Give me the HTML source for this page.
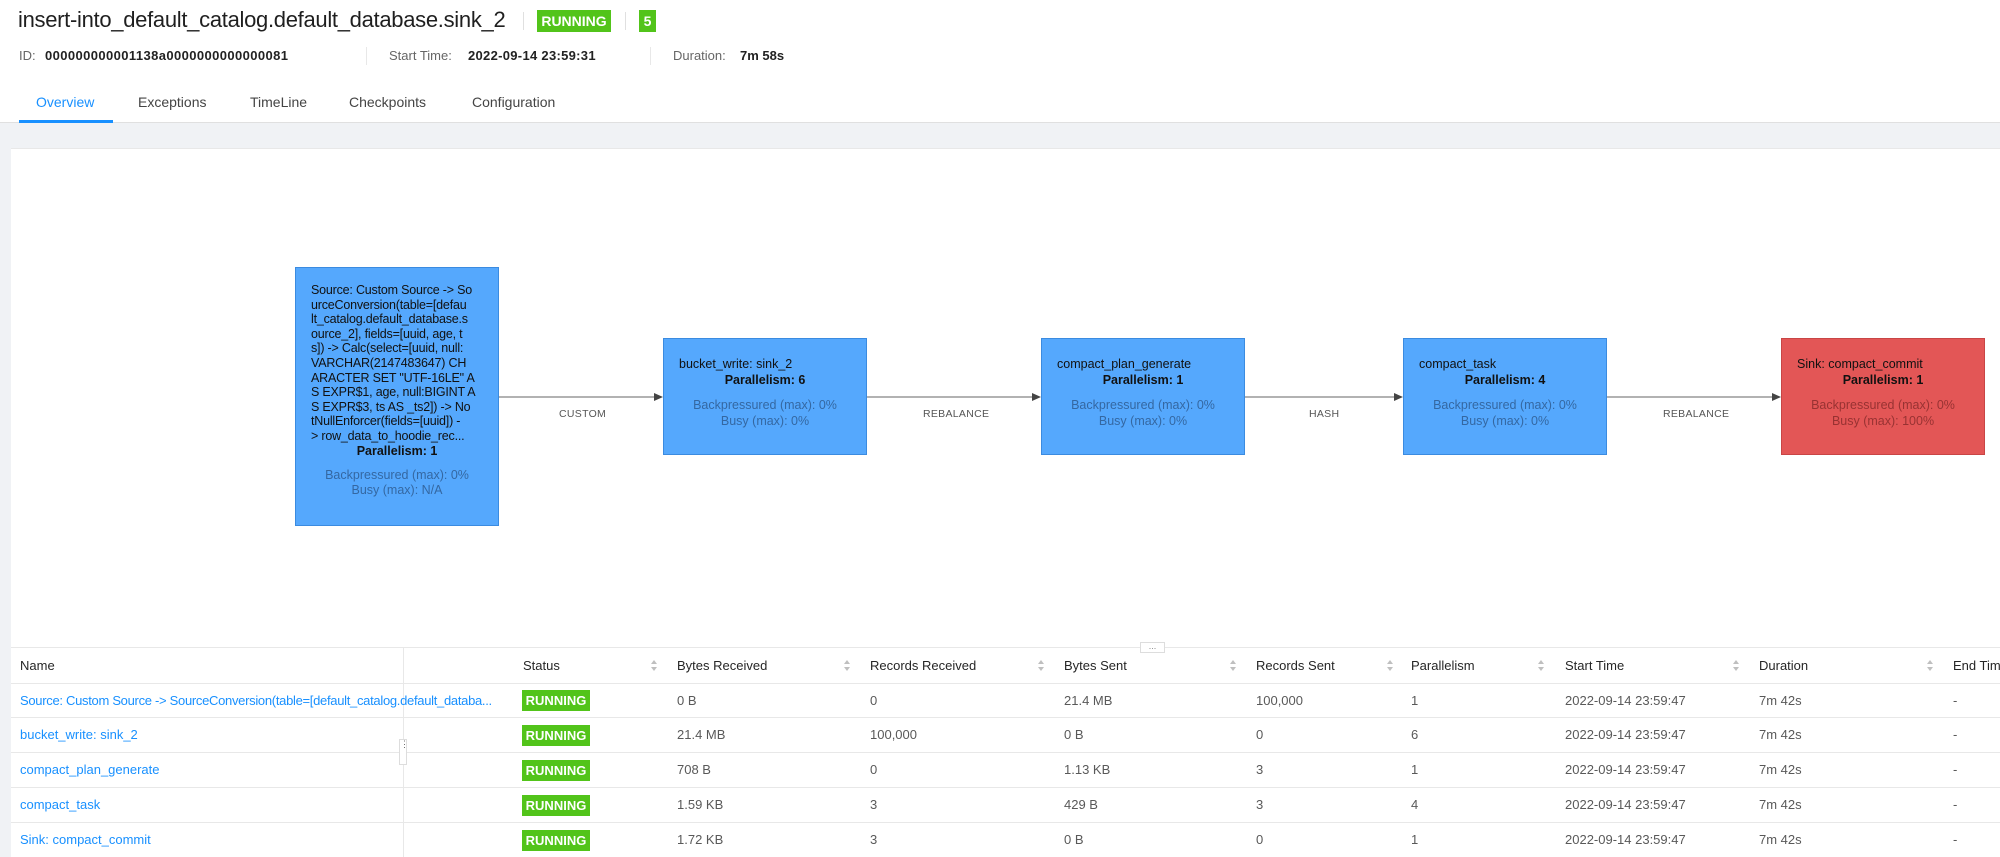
<!DOCTYPE html>
<html><head><meta charset="utf-8"><style>
*{margin:0;padding:0;box-sizing:border-box}
body{width:2000px;height:857px;overflow:hidden;background:#fff;font-family:"Liberation Sans",sans-serif;position:relative;color:#595959}
.a{position:absolute;white-space:nowrap}
.badge{position:absolute;background:#52c41a;color:#fff;font-weight:bold;text-align:center}
.node{position:absolute;background:#55a8fd;border:1px solid #3b8be0;font-size:12.5px;line-height:15.5px;color:#111}
.node.red{background:#e35656;border-color:#c94545}
.node .t{padding:0 10px 0 15px;white-space:nowrap}
.node .p{text-align:center;font-weight:bold}
.node .m{text-align:center;color:rgba(30,60,100,.6);margin-top:10px;line-height:15.5px}
.node.red .m{color:rgba(110,30,30,.65)}
.el{position:absolute;font-size:10.5px;color:#555;letter-spacing:.3px}
.hd{position:absolute;font-size:13px;color:#262626;top:658px;white-space:nowrap}
.cell{position:absolute;font-size:13px;color:#595959;white-space:nowrap}
.lnk{color:#1890ff}
.hl{position:absolute;left:11px;right:0;height:1px;background:#e8e8e8}
</style></head><body>
<div class="a" style="left:18px;top:7px;font-size:22px;color:#1f1f1f;letter-spacing:-0.3px">insert-into_default_catalog.default_database.sink_2</div>
<div class="a" style="left:523px;top:12px;width:1px;height:18px;background:#e0e0e0"></div>
<div class="badge" style="left:537px;top:10px;width:74px;height:22px;font-size:14px;line-height:22px">RUNNING</div>
<div class="a" style="left:625px;top:12px;width:1px;height:18px;background:#e0e0e0"></div>
<div class="badge" style="left:639px;top:10px;width:17px;height:22px;font-size:14px;line-height:22px">5</div>

<div class="a" style="left:19px;top:48px;font-size:13px;color:#666">ID:</div>
<div class="a" style="left:45px;top:48px;font-size:13px;color:#222;font-weight:bold;letter-spacing:0.4px">000000000001138a0000000000000081</div>
<div class="a" style="left:366px;top:47px;width:1px;height:18px;background:#e8e8e8"></div>
<div class="a" style="left:389px;top:48px;font-size:13px;color:#666">Start Time:</div>
<div class="a" style="left:468px;top:48px;font-size:13px;color:#222;font-weight:bold;letter-spacing:0.3px">2022-09-14 23:59:31</div>
<div class="a" style="left:650px;top:47px;width:1px;height:18px;background:#e8e8e8"></div>
<div class="a" style="left:673px;top:48px;font-size:13px;color:#666">Duration:</div>
<div class="a" style="left:740px;top:48px;font-size:13px;color:#222;font-weight:bold">7m 58s</div>

<div class="a" style="left:36px;top:94px;font-size:14px;color:#1890ff">Overview</div>
<div class="a" style="left:138px;top:94px;font-size:14px;color:#444">Exceptions</div>
<div class="a" style="left:250px;top:94px;font-size:14px;color:#444">TimeLine</div>
<div class="a" style="left:349px;top:94px;font-size:14px;color:#444">Checkpoints</div>
<div class="a" style="left:472px;top:94px;font-size:14px;color:#444">Configuration</div>
<div class="a" style="left:0;top:122px;width:2000px;height:26px;background:#f0f2f5;border-top:1px solid #e0e0e0"></div>
<div class="a" style="left:19px;top:120px;width:94px;height:3px;background:#1890ff"></div>
<div class="a" style="left:0;top:148px;width:11px;height:709px;background:#f0f2f5"></div>
<div class="a" style="left:11px;top:148px;width:1989px;height:1px;background:#e8e8e8"></div>

<svg class="a" style="left:0;top:0" width="2000" height="857">
<g stroke="#666" stroke-width="1">
<line x1="499" y1="397" x2="656" y2="397"/><line x1="867" y1="397" x2="1034" y2="397"/>
<line x1="1245" y1="397" x2="1396" y2="397"/><line x1="1607" y1="397" x2="1774" y2="397"/>
</g>
<g fill="#444">
<path d="M663 397l-9-4v8z"/><path d="M1041 397l-9-4v8z"/><path d="M1403 397l-9-4v8z"/><path d="M1781 397l-9-4v8z"/>
</g>
</svg>
<div class="el" style="left:559px;top:408px">CUSTOM</div>
<div class="el" style="left:923px;top:408px">REBALANCE</div>
<div class="el" style="left:1309px;top:408px">HASH</div>
<div class="el" style="left:1663px;top:408px">REBALANCE</div>

<div class="node" style="left:295px;top:267px;width:204px;height:259px;padding-top:15px;line-height:14.6px">
<div class="t" style="padding:0 8px 0 15px;letter-spacing:-0.2px">Source: Custom Source -&gt; So<br>urceConversion(table=[defau<br>lt_catalog.default_database.s<br>ource_2], fields=[uuid, age, t<br>s]) -&gt; Calc(select=[uuid, null:<br>VARCHAR(2147483647) CH<br>ARACTER SET "UTF-16LE" A<br>S EXPR$1, age, null:BIGINT A<br>S EXPR$3, ts AS _ts2]) -&gt; No<br>tNullEnforcer(fields=[uuid]) -<br>&gt; row_data_to_hoodie_rec...</div>
<div class="p" style="line-height:15px">Parallelism: 1</div>
<div class="m" style="margin-top:9px">Backpressured (max): 0%<br>Busy (max): N/A</div></div>

<div class="node" style="left:663px;top:338px;width:204px;height:117px;padding-top:18px">
<div class="t">bucket_write: sink_2</div><div class="p">Parallelism: 6</div>
<div class="m">Backpressured (max): 0%<br>Busy (max): 0%</div></div>
<div class="node" style="left:1041px;top:338px;width:204px;height:117px;padding-top:18px">
<div class="t">compact_plan_generate</div><div class="p">Parallelism: 1</div>
<div class="m">Backpressured (max): 0%<br>Busy (max): 0%</div></div>
<div class="node" style="left:1403px;top:338px;width:204px;height:117px;padding-top:18px">
<div class="t">compact_task</div><div class="p">Parallelism: 4</div>
<div class="m">Backpressured (max): 0%<br>Busy (max): 0%</div></div>
<div class="node red" style="left:1781px;top:338px;width:204px;height:117px;padding-top:18px">
<div class="t">Sink: compact_commit</div><div class="p">Parallelism: 1</div>
<div class="m">Backpressured (max): 0%<br>Busy (max): 100%</div></div>

<div class="hl" style="top:647px"></div>
<div class="a" style="left:1140px;top:642px;width:25px;height:11px;border:1px solid #ddd;background:#fff;font-size:9px;line-height:6px;text-align:center;color:#888">...</div>
<div class="hl" style="top:683px"></div>
<div class="hl" style="top:717px"></div>
<div class="hl" style="top:752px"></div>
<div class="hl" style="top:787px"></div>
<div class="hl" style="top:822px"></div>
<div class="a" style="left:403px;top:647px;width:1px;height:210px;background:#e8e8e8"></div>
<div class="a" style="left:399px;top:739px;width:8px;height:26px;border:1px solid #ddd;background:#fff;font-size:9px;line-height:8px;text-align:center;color:#666">⋮</div>

<div class="hd" style="left:20px">Name</div>
<div class="hd" style="left:523px">Status</div>
<div class="hd" style="left:677px">Bytes Received</div>
<div class="hd" style="left:870px">Records Received</div>
<div class="hd" style="left:1064px">Bytes Sent</div>
<div class="hd" style="left:1256px">Records Sent</div>
<div class="hd" style="left:1411px">Parallelism</div>
<div class="hd" style="left:1565px">Start Time</div>
<div class="hd" style="left:1759px">Duration</div>
<div class="hd" style="left:1953px">End Time</div>
<svg class="a" style="left:0;top:0" width="2000" height="857"><g fill="#bfbfbf">
<path d="M651 664l3-4 3 4z M651 667l3 4 3-4z"/><path d="M844 664l3-4 3 4z M844 667l3 4 3-4z"/>
<path d="M1038 664l3-4 3 4z M1038 667l3 4 3-4z"/><path d="M1230 664l3-4 3 4z M1230 667l3 4 3-4z"/>
<path d="M1387 664l3-4 3 4z M1387 667l3 4 3-4z"/><path d="M1538 664l3-4 3 4z M1538 667l3 4 3-4z"/>
<path d="M1733 664l3-4 3 4z M1733 667l3 4 3-4z"/><path d="M1927 664l3-4 3 4z M1927 667l3 4 3-4z"/>
</g></svg>

<div class="cell lnk" style="left:20px;top:693px;letter-spacing:-0.3px">Source: Custom Source -&gt; SourceConversion(table=[default_catalog.default_databa...</div>
<div class="cell lnk" style="left:20px;top:727px">bucket_write: sink_2</div>
<div class="cell lnk" style="left:20px;top:762px">compact_plan_generate</div>
<div class="cell lnk" style="left:20px;top:797px">compact_task</div>
<div class="cell lnk" style="left:20px;top:832px">Sink: compact_commit</div>

<div class="badge" style="left:522px;top:690px;width:68px;height:21px;font-size:13px;line-height:21px">RUNNING</div>
<div class="badge" style="left:522px;top:725px;width:68px;height:21px;font-size:13px;line-height:21px">RUNNING</div>
<div class="badge" style="left:522px;top:760px;width:68px;height:21px;font-size:13px;line-height:21px">RUNNING</div>
<div class="badge" style="left:522px;top:795px;width:68px;height:21px;font-size:13px;line-height:21px">RUNNING</div>
<div class="badge" style="left:522px;top:830px;width:68px;height:21px;font-size:13px;line-height:21px">RUNNING</div>

<div class="cell" style="left:677px;top:693px">0 B</div><div class="cell" style="left:870px;top:693px">0</div><div class="cell" style="left:1064px;top:693px">21.4 MB</div><div class="cell" style="left:1256px;top:693px">100,000</div><div class="cell" style="left:1411px;top:693px">1</div><div class="cell" style="left:1565px;top:693px">2022-09-14 23:59:47</div><div class="cell" style="left:1759px;top:693px">7m 42s</div><div class="cell" style="left:1953px;top:693px">-</div>
<div class="cell" style="left:677px;top:727px">21.4 MB</div><div class="cell" style="left:870px;top:727px">100,000</div><div class="cell" style="left:1064px;top:727px">0 B</div><div class="cell" style="left:1256px;top:727px">0</div><div class="cell" style="left:1411px;top:727px">6</div><div class="cell" style="left:1565px;top:727px">2022-09-14 23:59:47</div><div class="cell" style="left:1759px;top:727px">7m 42s</div><div class="cell" style="left:1953px;top:727px">-</div>
<div class="cell" style="left:677px;top:762px">708 B</div><div class="cell" style="left:870px;top:762px">0</div><div class="cell" style="left:1064px;top:762px">1.13 KB</div><div class="cell" style="left:1256px;top:762px">3</div><div class="cell" style="left:1411px;top:762px">1</div><div class="cell" style="left:1565px;top:762px">2022-09-14 23:59:47</div><div class="cell" style="left:1759px;top:762px">7m 42s</div><div class="cell" style="left:1953px;top:762px">-</div>
<div class="cell" style="left:677px;top:797px">1.59 KB</div><div class="cell" style="left:870px;top:797px">3</div><div class="cell" style="left:1064px;top:797px">429 B</div><div class="cell" style="left:1256px;top:797px">3</div><div class="cell" style="left:1411px;top:797px">4</div><div class="cell" style="left:1565px;top:797px">2022-09-14 23:59:47</div><div class="cell" style="left:1759px;top:797px">7m 42s</div><div class="cell" style="left:1953px;top:797px">-</div>
<div class="cell" style="left:677px;top:832px">1.72 KB</div><div class="cell" style="left:870px;top:832px">3</div><div class="cell" style="left:1064px;top:832px">0 B</div><div class="cell" style="left:1256px;top:832px">0</div><div class="cell" style="left:1411px;top:832px">1</div><div class="cell" style="left:1565px;top:832px">2022-09-14 23:59:47</div><div class="cell" style="left:1759px;top:832px">7m 42s</div><div class="cell" style="left:1953px;top:832px">-</div>
</body></html>
